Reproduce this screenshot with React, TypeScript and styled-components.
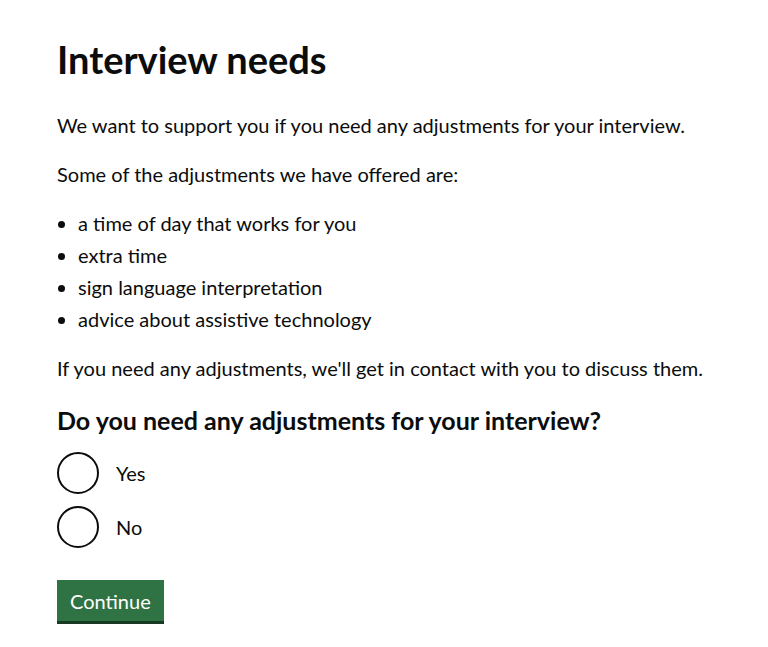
import styled, { createGlobalStyle } from "styled-components";

const GlobalStyle = createGlobalStyle`
  html, body {
    margin: 0;
    padding: 0;
    background: #fff;
  }
  body {
    font-family: Lato, "Noto Sans", Arial, sans-serif;
    color: #0b0c0c;
  }
`;

const Main = styled.main`
  padding: 38px 57px 20px;
  max-width: 660px;
`;

const Heading = styled.h1`
  margin: 0 0 32px;
  font-size: 38px;
  line-height: 42px;
  font-weight: 700;
`;

const Body = styled.p`
  margin: 0 0 22px;
  font-size: 20px;
  line-height: 27px;
`;

const List = styled.ul`
  margin: 0 0 22px;
  padding-left: 21px;
  font-size: 20px;
  line-height: 27px;

  li {
    margin-bottom: 5px;
  }
`;

const Fieldset = styled.fieldset`
  margin: 0 0 20px;
  padding: 0;
  border: 0;
`;

const Legend = styled.legend`
  padding: 0;
  margin: 0 0 16px;
  font-size: 25px;
  line-height: 32px;
  font-weight: 700;
`;

const RadioRow = styled.label`
  display: flex;
  align-items: center;
  gap: 17px;
  margin-bottom: 12px;
  font-size: 20px;
  cursor: pointer;
`;

const Circle = styled.span`
  box-sizing: border-box;
  width: 42px;
  height: 42px;
  border: 2px solid #0b0c0c;
  border-radius: 50%;
  flex-shrink: 0;
`;

const Button = styled.button`
  font-family: inherit;
  font-size: 20px;
  line-height: 1;
  color: #fff;
  background: #2f7344;
  border: 0;
  border-radius: 0;
  padding: 11px 13px 10px;
  box-shadow: 0 3px 0 #173a22;
  cursor: pointer;
`;

const options = ["Yes", "No"];

export default function App() {
  return (
    <>
      <GlobalStyle />
      <Main>
        <Heading>Interview needs</Heading>
        <Body>We want to support you if you need any adjustments for your interview.</Body>
        <Body>Some of the adjustments we have offered are:</Body>
        <List>
          <li>a time of day that works for you</li>
          <li>extra time</li>
          <li>sign language interpretation</li>
          <li>advice about assistive technology</li>
        </List>
        <Body>If you need any adjustments, we'll get in contact with you to discuss them.</Body>
        <Fieldset>
          <Legend>Do you need any adjustments for your interview?</Legend>
          {options.map((o) => (
            <RadioRow key={o}>
              <Circle />
              {o}
            </RadioRow>
          ))}
        </Fieldset>
        <Button>Continue</Button>
      </Main>
    </>
  );
}
